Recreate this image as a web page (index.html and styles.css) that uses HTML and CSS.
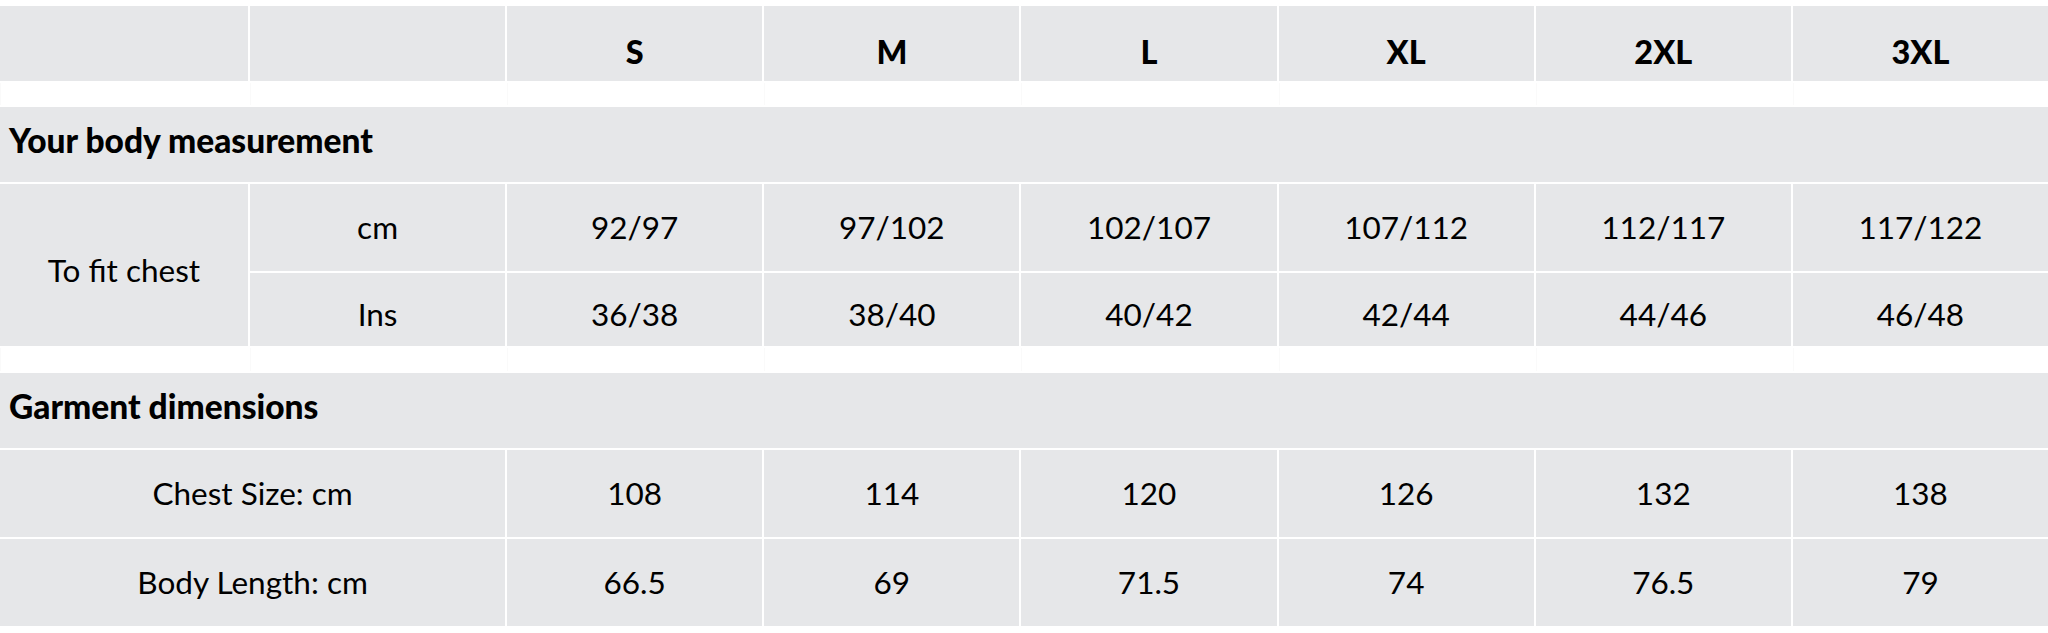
FILE: index.html
```html
<!DOCTYPE html>
<html lang="en">
<head>
<meta charset="utf-8">
<title>Size chart</title>
<link rel="stylesheet" href="styles.css">
</head>
<body>
<div class="chart">
  <div class="cell head"></div>
  <div class="cell head"></div>
  <div class="cell head">S</div>
  <div class="cell head">M</div>
  <div class="cell head">L</div>
  <div class="cell head">XL</div>
  <div class="cell head">2XL</div>
  <div class="cell head">3XL</div>

  <div class="spacer"></div><div class="spacer"></div><div class="spacer"></div><div class="spacer"></div>
  <div class="spacer"></div><div class="spacer"></div><div class="spacer"></div><div class="spacer"></div>

  <div class="cell section">Your body measurement</div>

  <div class="cell tall">To fit chest</div>
  <div class="cell">cm</div>
  <div class="cell">92/97</div>
  <div class="cell">97/102</div>
  <div class="cell">102/107</div>
  <div class="cell">107/112</div>
  <div class="cell">112/117</div>
  <div class="cell">117/122</div>

  <div class="cell low">Ins</div>
  <div class="cell low">36/38</div>
  <div class="cell low">38/40</div>
  <div class="cell low">40/42</div>
  <div class="cell low">42/44</div>
  <div class="cell low">44/46</div>
  <div class="cell low">46/48</div>

  <div class="spacer"></div><div class="spacer"></div><div class="spacer"></div><div class="spacer"></div>
  <div class="spacer"></div><div class="spacer"></div><div class="spacer"></div><div class="spacer"></div>

  <div class="cell section">Garment dimensions</div>

  <div class="cell wide">Chest Size: cm</div>
  <div class="cell">108</div>
  <div class="cell">114</div>
  <div class="cell">120</div>
  <div class="cell">126</div>
  <div class="cell">132</div>
  <div class="cell">138</div>

  <div class="cell wide">Body Length: cm</div>
  <div class="cell">66.5</div>
  <div class="cell">69</div>
  <div class="cell">71.5</div>
  <div class="cell">74</div>
  <div class="cell">76.5</div>
  <div class="cell">79</div>
</div>
</body>
</html>
```

FILE: styles.css
```css
html, body {
  margin: 0;
  padding: 0;
  background: #ffffff;
}

body {
  font-family: "Lato", "Open Sans", sans-serif;
  color: #000000;
}

.chart {
  display: grid;
  grid-template-columns: 248px repeat(7, 1fr);
  grid-template-rows: 75px 22px 75px 87px 73px 23px 75px 87px 87px;
  gap: 2px;
  padding-top: 6px;
}

.cell {
  background: #e6e7e9;
  display: flex;
  align-items: center;
  justify-content: center;
  font-size: 31.5px;
  font-weight: 400;
  line-height: 1;
  box-sizing: border-box;
}

.head {
  font-weight: 900;
  font-size: 32.5px;
  padding-top: 17px;
}

.spacer {
  background: #ffffff;
  border-left: 1px solid #fafafa;
}

.section {
  grid-column: 1 / -1;
  justify-content: flex-start;
  padding-left: 9px;
  padding-bottom: 8px;
  font-weight: 900;
  font-size: 33.5px;
}

.tall {
  grid-row: span 2;
  padding-top: 12px;
}

.low {
  padding-top: 10px;
}

.wide {
  grid-column: span 2;
}
```
